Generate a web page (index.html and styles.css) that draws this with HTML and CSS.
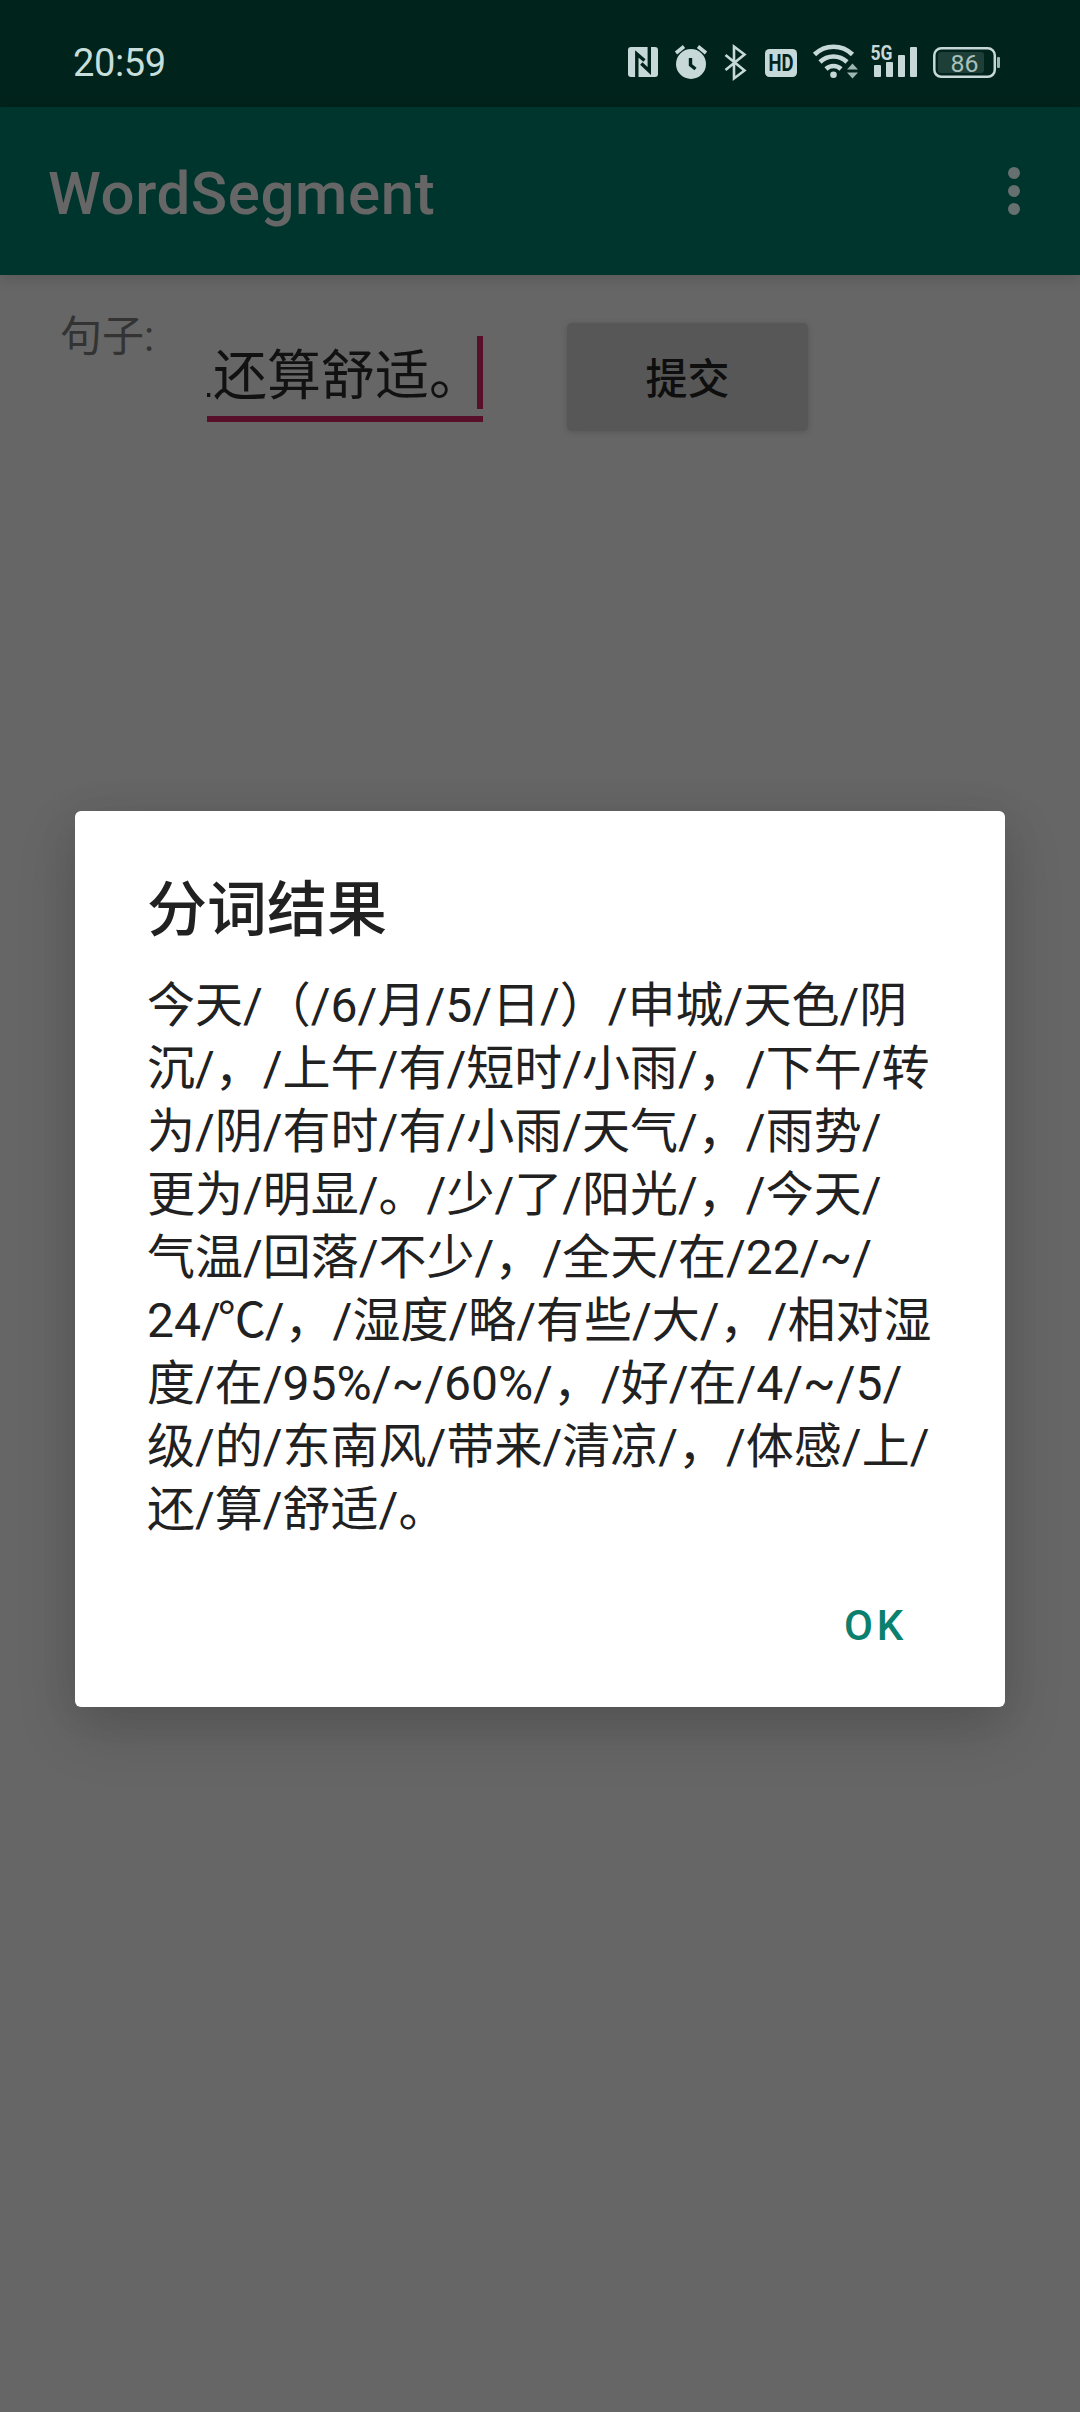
FILE: index.html
```html
<!DOCTYPE html>
<html lang="zh-CN">
<head>
<meta charset="utf-8">
<title>WordSegment</title>
<link rel="stylesheet" href="styles.css">
</head>
<body>
<div class="screen">
  <header class="status">
    <span class="clock">20:59</span>
    <svg class="status-icons" width="380" height="40" viewBox="625 42 380 40">
      <g class="nfc">
        <rect class="fill" x="628" y="47" width="30" height="30" rx="3"/>
        <path class="cut" d="M636.800 77V54l7.700 6.500M649.300 47v24l-8-7.500"/>
      </g>
      <g class="alarm">
        <circle class="fill" cx="691" cy="64" r="15"/>
        <path class="line" stroke-width="3.600" d="M676 53l8-6.500M706 53l-8-6.500"/>
        <path class="cut" d="M690.500 58v7l5 4"/>
      </g>
      <path class="line" stroke-width="2.600" d="M725.500 55l19 15.500-10.500 8V46.500l10.500 8L725.500 70"/>
      <g>
        <rect class="fill" x="765" y="49" width="32" height="28" rx="4.500"/>
        <text class="hd" x="768.500" y="71" textLength="25" lengthAdjust="spacingAndGlyphs">HD</text>
      </g>
      <g class="wifi">
        <path class="line" stroke-width="4.600" d="M814.500 54.500a27 27 0 0 1 38 0M820 62a19.500 19.500 0 0 1 27 0M826 69a11 11 0 0 1 15 0"/>
        <circle class="fill" cx="833.500" cy="74.800" r="3.300"/>
        <path class="dim" d="M847 69.500l5.500-6 5.500 6zM847 72.500l5.500 6 5.500-6z"/>
      </g>
      <g>
        <rect class="fill" x="874" y="65" width="7" height="12" rx="1"/>
        <rect class="fill" x="886" y="62" width="7" height="15" rx="1"/>
        <rect class="fill" x="898" y="55" width="7" height="22" rx="1"/>
        <rect class="fill" x="910" y="47" width="7" height="30" rx="1"/>
        <text class="net" x="870.500" y="60" textLength="22" lengthAdjust="spacingAndGlyphs">5G</text>
      </g>
      <g>
        <rect class="charge" x="938" y="52" width="46" height="21" rx="3"/>
        <rect class="line" stroke-width="2.500" x="934.300" y="48.300" width="60.500" height="28.500" rx="7"/>
        <rect class="dim" x="997" y="57" width="3" height="11" rx="1"/>
        <text class="level" x="950.500" y="71.500" textLength="28" lengthAdjust="spacingAndGlyphs">86</text>
      </g>
    </svg>
  </header>
  <nav class="toolbar">
    <h1 class="app-name">WordSegment</h1>
    <svg class="more" width="12" height="48" viewBox="0 0 12 48"><circle cx="6" cy="6" r="6"/><circle cx="6" cy="24" r="6"/><circle cx="6" cy="42" r="6"/></svg>
  </nav>
  <main class="content">
    <label class="label">句子:</label>
    <div class="input"><span>上还算舒适。</span><i class="caret"></i></div>
    <button class="submit">提交</button>
  </main>
  <section class="dialog">
    <h2 class="dialog-title">分词结果</h2>
    <div class="message">
      <p>今天/（/6/月/5/日/）/申城/天色/阴</p>
      <p>沉/，/上午/有/短时/小雨/，/下午/转</p>
      <p>为/阴/有时/有/小雨/天气/，/雨势/</p>
      <p>更为/明显/。/少/了/阳光/，/今天/</p>
      <p>气温/回落/不少/，/全天/在/22/~/</p>
      <p>24/<span class="unit">℃</span>/，/湿度/略/有些/大/，/相对湿</p>
      <p>度/在/95%/~/60%/，/好/在/4/~/5/</p>
      <p>级/的/东南风/带来/清凉/，/体感/上/</p>
      <p>还/算/舒适/。</p>
    </div>
    <div class="actions"><button class="ok">OK</button></div>
  </section>
</div>
</body>
</html>
```
FILE: styles.css
```css
* { box-sizing: border-box; margin: 0; padding: 0; }

body {
  background: #666;
  font-family: Roboto, "Noto Sans CJK SC", sans-serif;
}

button { border: 0; background: none; font-family: inherit; }

.screen {
  position: relative;
  width: 1080px;
  height: 2412px;
  overflow: hidden;
  background: #666;
}

.status {
  display: flex;
  justify-content: space-between;
  height: 107px;
  padding: 42px 75px 0 73px;
  background: #00231b;
}

.clock { font-size: 38px; line-height: 42px; letter-spacing: -0.4px; color: #c8dedb; }

.status-icons { display: block; }
.fill { fill: #c6d8d7; }
.dim { fill: #9fb5b1; }
.charge { fill: #1d3f38; }
.line { fill: none; stroke: #c6d8d7; }
.cut { fill: none; stroke: #00231b; stroke-width: 3.4; }
.hd { font-size: 23px; font-weight: 700; fill: #00231b; }
.net { font-size: 20px; font-weight: 700; fill: #c6d8d7; }
.level { font-size: 24px; fill: #a9c0bc; }

.toolbar {
  position: relative;
  display: flex;
  align-items: center;
  justify-content: space-between;
  height: 168px;
  padding: 0 60px 0 48px;
  background: #00352d;
  box-shadow: 0 3px 14px rgba(0, 0, 0, .15);
}

.app-name { padding-top: 5px; font-size: 60px; line-height: 70px; font-weight: 500; letter-spacing: .6px; color: #666; }
.more { fill: #66706f; }

.content {
  display: flex;
  align-items: flex-start;
  padding: 30px 0 0 60px;
}

.label { width: 147px; padding-top: 2px; font-size: 42px; line-height: 60px; color: #333; }

.input {
  display: flex;
  justify-content: flex-end;
  position: relative;
  width: 276px;
  height: 86px;
  margin-top: 31px;
  overflow: hidden;
  border-bottom: 6px solid #580f29;
  font-size: 54px;
  line-height: 82px;
  white-space: nowrap;
  color: #111;
}

.caret { position: absolute; top: 0; right: 0; width: 6px; height: 73px; background: #580f29; }

.submit {
  width: 241px;
  height: 108px;
  margin: 18px 0 0 84px;
  padding-bottom: 3px;
  border-radius: 5px;
  background: #575757;
  box-shadow: 0 1px 6px rgba(0, 0, 0, .16);
  font-size: 42px;
  font-weight: 500;
  color: #0e0e0e;
}

.dialog {
  position: absolute;
  top: 811px;
  left: 75px;
  width: 930px;
  height: 896px;
  padding: 58px 60px 0 72px;
  border-radius: 6px;
  background: #fff;
  color: #212121;
  box-shadow: 0 24px 60px rgba(0, 0, 0, .16), 0 4px 40px rgba(0, 0, 0, .07);
}

.dialog-title { font-size: 60px; line-height: 84px; font-weight: 500; }

.message { margin-top: 21px; font-size: 48px; line-height: 63px; letter-spacing: 0; }
.message p { height: 63px; white-space: nowrap; }
.unit { margin: 0 -1px 0 -3px; }

.actions { display: flex; justify-content: flex-end; padding: 60px 38px 0 0; }
.ok { font-size: 42px; line-height: 50px; font-weight: 500; letter-spacing: 3.75px; color: #0b806e; }
```
